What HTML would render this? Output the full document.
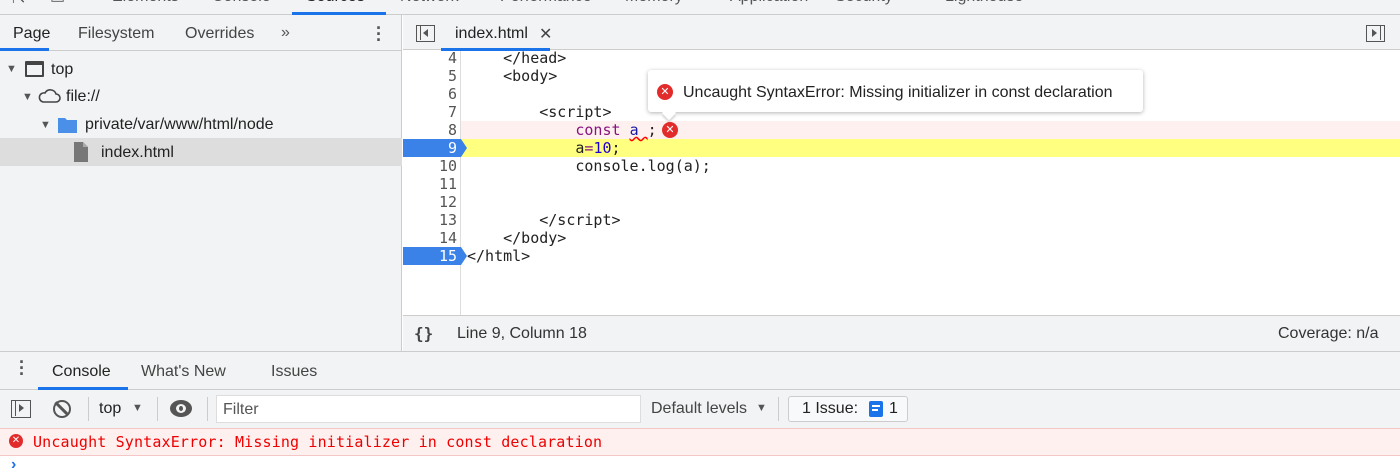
<!DOCTYPE html>
<html><head><meta charset="utf-8"><style>
*{box-sizing:border-box;margin:0;padding:0}
body{width:1400px;height:472px;overflow:hidden;background:#fff;font-family:"Liberation Sans",sans-serif;font-size:16px;color:#333;position:relative}
.a{position:absolute}
.mono{font-family:"DejaVu Sans Mono",monospace;font-size:15px;letter-spacing:0;line-height:18px}
.tag{color:#881280}
.ln{position:absolute;left:403px;width:54px;text-align:right;color:#555}
.code{position:absolute;left:467px;white-space:pre;color:#222}
.err{display:inline-block;width:16px;height:16px;border-radius:50%;background:#e22b2b;color:#fff;font-size:11px;line-height:16px;text-align:center;font-weight:bold;font-family:"DejaVu Sans",sans-serif}
.u{margin-top:1px}
</style></head><body>
<div class="a" style="left:0;top:0;width:1400px;height:15px;background:#f1f3f4;border-bottom:1px solid #ccc"></div>
<div class="a" style="top:-12px;left:0;width:1400px;height:20px;color:#555;font-size:16px;white-space:nowrap">
<span class="a" style="left:12px">⇱</span><span class="a" style="left:50px">▭</span>
<span class="a" style="left:112px">Elements</span><span class="a" style="left:212px">Console</span><span class="a" style="left:306px;color:#222">Sources</span><span class="a" style="left:400px">Network</span><span class="a" style="left:500px">Performance</span><span class="a" style="left:625px">Memory</span><span class="a" style="left:730px">Application</span><span class="a" style="left:835px">Security</span><span class="a" style="left:945px">Lighthouse</span></div>
<div class="a" style="left:292px;top:12px;width:94px;height:3px;background:#1a73e8"></div>
<div class="a" style="left:0;top:15px;width:402px;height:337px;background:#f1f3f4;border-right:1px solid #ccc"></div>
<div class="a" style="left:0;top:50px;width:402px;height:1px;background:#ccc"></div>
<div class="a" style="left:13px;top:25px;color:#222">Page</div>
<div class="a" style="left:78px;top:25px;color:#444">Filesystem</div>
<div class="a" style="left:185px;top:25px;color:#444">Overrides</div>
<div class="a" style="left:281px;top:24px;color:#555">»</div>
<div class="a" style="left:376px;top:25px;color:#555;font-weight:bold;line-height:6px;font-size:18px">·<br>·<br>·</div>
<div class="a" style="left:0;top:48px;width:49px;height:3px;background:#1a73e8"></div>
<div class="a" style="left:6px;top:63px;font-size:11px;color:#555">▼</div>
<div class="a" style="left:25px;top:61px;width:19px;height:16px;border:2px solid #444;border-top-width:4px;border-radius:1px"></div>
<div class="a" style="left:51px;top:61px;color:#222">top</div>
<div class="a" style="left:22px;top:91px;font-size:11px;color:#555">▼</div>
<svg class="a" style="left:36px;top:86px" width="26" height="20"><path d="M7 16h13a4 4 0 0 0 0-8 6 6 0 0 0-11-1 4.5 4.5 0 0 0-2 9z" fill="none" stroke="#444" stroke-width="1.6"/></svg>
<div class="a" style="left:66px;top:88px;color:#222">file://</div>
<div class="a" style="left:40px;top:119px;font-size:11px;color:#555">▼</div>
<svg class="a" style="left:57px;top:115px" width="22" height="20"><path d="M1 3h7l2 2h10v13H1z" fill="#4a90e8"/></svg>
<div class="a" style="left:85px;top:116px;color:#222">private/var/www/html/node</div>
<div class="a" style="left:0;top:138px;width:402px;height:28px;background:#ddd"></div>
<svg class="a" style="left:73px;top:141px" width="16" height="22"><path d="M1 1h9l5 5v15H1z" fill="#777"/><path d="M10 1v5h5" fill="#aaa"/></svg>
<div class="a" style="left:101px;top:144px;color:#222">index.html</div>
<div class="a" style="left:403px;top:15px;width:997px;height:35px;background:#f1f3f4;border-bottom:1px solid #ccc"></div>
<div class="a" style="left:416px;top:25px;width:19px;height:17px;border:1.5px solid #555"><div class="a" style="left:3px;top:0;width:1px;height:14px;background:#555"></div><div class="a" style="left:6px;top:3px;border:4px solid transparent;border-right:5px solid #555;border-left:0"></div></div>
<div class="a" style="left:455px;top:25px;color:#222">index.html</div>
<div class="a" style="left:539px;top:24px;color:#444">✕</div>
<div class="a" style="left:441px;top:48px;width:109px;height:3px;background:#1a73e8"></div>
<div class="a" style="left:1366px;top:25px;width:19px;height:17px;border:1.5px solid #555"><div class="a" style="right:3px;top:0;width:1px;height:14px;background:#555"></div><div class="a" style="left:5px;top:3px;border:4px solid transparent;border-left:5px solid #555;border-right:0"></div></div>
<div class="a" style="left:460px;top:51px;width:1px;height:264px;background:#ddd"></div>
<div class="a" style="left:461px;top:121px;width:939px;height:18px;background:#fff0f0"></div>
<div class="a" style="left:461px;top:139px;width:939px;height:18px;background:#ffff80"></div>
<svg class="a" style="left:403px;top:139px" width="64" height="18"><path d="M0 0h58l6 9-6 9H0z" fill="#3b82e8"/></svg>
<svg class="a" style="left:403px;top:247px" width="64" height="18"><path d="M0 0h58l6 9-6 9H0z" fill="#3b82e8"/></svg>
<div class="mono">
<div class="ln" style="top:49px">4</div><div class="code tag" style="top:49px">    &lt;/head&gt;</div>
<div class="ln" style="top:67px">5</div><div class="code tag" style="top:67px">    &lt;body&gt;</div>
<div class="ln" style="top:85px">6</div>
<div class="ln" style="top:103px">7</div><div class="code tag" style="top:103px">        &lt;script&gt;</div>
<div class="ln" style="top:121px">8</div><div class="code" style="top:121px">            <span class="tag">const</span> <span style="color:#1a1aa6;text-decoration:underline wavy red">a </span>;</div>
<div class="ln" style="top:139px;color:#fff">9</div><div class="code" style="top:139px">            a<span style="color:#881280">=</span><span style="color:#1c00cf">10</span>;</div>
<div class="ln" style="top:157px">10</div><div class="code" style="top:157px">            console.log(a);</div>
<div class="ln" style="top:175px">11</div>
<div class="ln" style="top:193px">12</div>
<div class="ln" style="top:211px">13</div><div class="code tag" style="top:211px">        &lt;/script&gt;</div>
<div class="ln" style="top:229px">14</div><div class="code tag" style="top:229px">    &lt;/body&gt;</div>
<div class="ln" style="top:247px;color:#fff">15</div><div class="code tag" style="top:247px">&lt;/html&gt;</div>
</div>
<span class="err a" style="left:662px;top:122px">✕</span>
<div class="a" style="left:648px;top:70px;width:495px;height:42px;background:#fff;border-radius:3px;box-shadow:0 1px 4px rgba(0,0,0,.3)"></div>
<div class="a" style="left:664px;top:108px;width:10px;height:10px;background:#fff;transform:rotate(45deg);box-shadow:2px 2px 2px rgba(0,0,0,.15)"></div>
<span class="err a" style="left:657px;top:84px">✕</span>
<div class="a" style="left:683px;top:84px;color:#222">Uncaught SyntaxError: Missing initializer in const declaration</div>
<div class="a" style="left:403px;top:315px;width:997px;height:37px;background:#f1f3f4;border-top:1px solid #ccc"></div>
<div class="a" style="left:414px;top:324px;color:#444;font-weight:bold;font-family:'DejaVu Sans Mono',monospace">{}</div>
<div class="a" style="left:457px;top:325px;color:#333">Line 9, Column 18</div>
<div class="a" style="left:1278px;top:325px;color:#333">Coverage: n/a</div>
<div class="a" style="left:0;top:351px;width:1400px;height:77px;background:#f1f3f4;border-top:1px solid #ccc"></div>
<div class="a" style="left:0;top:389px;width:1400px;height:1px;background:#ccc"></div>
<div class="a" style="left:19px;top:359px;color:#555;font-weight:bold;line-height:6px;font-size:18px">·<br>·<br>·</div>
<div class="a" style="left:52px;top:363px;color:#222">Console</div>
<div class="a" style="left:141px;top:363px;color:#444">What's New</div>
<div class="a" style="left:271px;top:363px;color:#444">Issues</div>
<div class="a" style="left:38px;top:387px;width:90px;height:3px;background:#1a73e8"></div>
<div class="a" style="left:11px;top:400px;width:20px;height:18px;border:1.5px solid #555"><div class="a" style="left:3px;top:0;width:1px;height:15px;background:#555"></div><div class="a" style="left:7px;top:3px;border:4px solid transparent;border-left:5px solid #555;border-right:0"></div></div>
<div class="a" style="left:53px;top:400px;width:18px;height:18px;border:2.5px solid #555;border-radius:50%"><div class="a" style="left:5px;top:-2px;width:2.5px;height:17px;background:#555;transform:rotate(-45deg)"></div></div>
<div class="a" style="left:88px;top:397px;width:1px;height:24px;background:#ccc"></div>
<div class="a" style="left:99px;top:400px;color:#222">top</div>
<div class="a" style="left:132px;top:402px;font-size:11px;color:#555">▼</div>
<div class="a" style="left:157px;top:397px;width:1px;height:24px;background:#ccc"></div>
<div class="a" style="left:170px;top:400px;width:22px;height:17px;border-radius:50%;background:#555"><div class="a" style="left:6px;top:4px;width:10px;height:9px;border-radius:50%;background:#f1f3f4"></div><div class="a" style="left:9px;top:6px;width:4px;height:5px;border-radius:50%;background:#555"></div></div>
<div class="a" style="left:207px;top:397px;width:1px;height:24px;background:#ccc"></div>
<div class="a" style="left:216px;top:395px;width:425px;height:28px;background:#fff;border:1px solid #ddd"></div>
<div class="a" style="left:223px;top:401px;color:#555">Filter</div>
<div class="a" style="left:651px;top:400px;color:#444">Default levels</div>
<div class="a" style="left:756px;top:402px;font-size:11px;color:#555">▼</div>
<div class="a" style="left:778px;top:397px;width:1px;height:24px;background:#ccc"></div>
<div class="a" style="left:788px;top:396px;width:120px;height:26px;border:1px solid #ccc;border-radius:3px;background:#f8f9fa"></div>
<div class="a" style="left:802px;top:400px;color:#222">1 Issue:</div>
<div class="a" style="left:869px;top:401px;width:14px;height:16px;background:#1a73e8;border-radius:2px"><div class="a" style="left:3px;top:4px;width:8px;height:2px;background:#fff"></div><div class="a" style="left:3px;top:8px;width:6px;height:2px;background:#fff"></div></div>
<div class="a" style="left:889px;top:400px;color:#222">1</div>
<div class="a" style="left:0;top:428px;width:1400px;height:28px;background:#fff0f0;border-top:1px solid #f5c6c6;border-bottom:1px solid #f5c6c6"></div>
<span class="err a" style="left:9px;top:434px;width:14px;height:14px;line-height:14px;font-size:10px">✕</span>
<div class="a mono" style="left:33px;top:433px;color:#e00;letter-spacing:0.15px">Uncaught SyntaxError: Missing initializer in const declaration</div>
<div class="a" style="left:11px;top:456px;color:#1a73e8;font-size:16px;font-weight:bold">›</div>
</body></html>
